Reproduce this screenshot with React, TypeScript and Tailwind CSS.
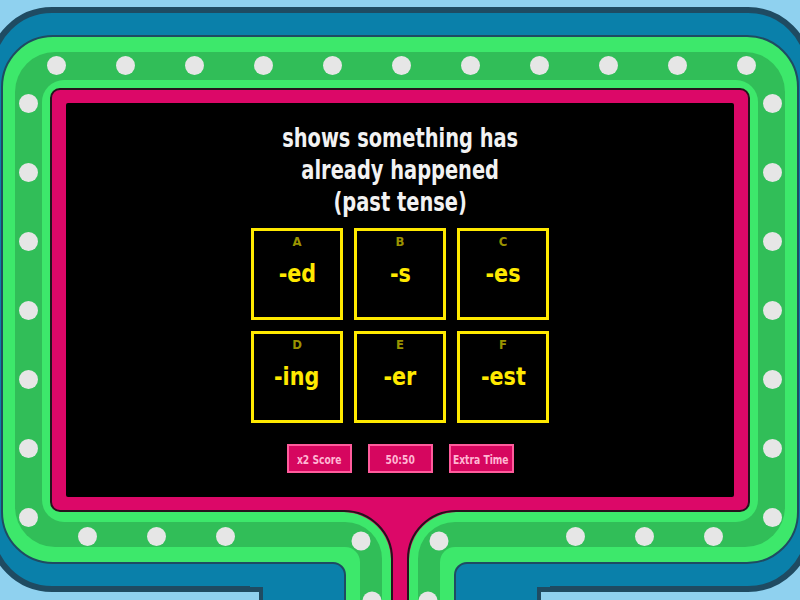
import React from "react";

const FONT = {
  fontFamily: '"DejaVu Sans Condensed", "DejaVu Sans", "Liberation Sans", sans-serif',
};

const Dot = () => <div className="w-[19px] h-[19px] rounded-full bg-[#e6e6e6] shrink-0" />;

function DotRow({ n, className }: { n: number; className: string }) {
  return (
    <div className={className}>
      {Array.from({ length: n }).map((_, i) => (
        <Dot key={i} />
      ))}
    </div>
  );
}

const answers = [
  { l: "A", t: "-ed" },
  { l: "B", t: "-s" },
  { l: "C", t: "-es" },
  { l: "D", t: "-ing" },
  { l: "E", t: "-er" },
  { l: "F", t: "-est" },
];

const LG = "#3de86b";
const MG = "#31be58";
const BLUE = "#0a80aa";
const DARK = "#1f4b62";
const PINK = "#dc0868";
const SKY = "#8fd1ef";

function Leg({ mirror }: { mirror?: boolean }) {
  return (
    <g transform={mirror ? "translate(800 0) scale(-1 1)" : undefined}>
      <path d="M250 512 H343 A48 48 0 0 1 391 560 V605 H250 Z" fill={LG} />
      <path d="M250 522 H345 A37 37 0 0 1 382 559 V605 H250 Z" fill={MG} />
      <path d="M250 547 H345 A15 15 0 0 1 360 562 V605 H250 Z" fill={LG} />
      <path d="M250 563 H333 A12 12 0 0 1 345 575 V605 H250 Z" fill={BLUE} />
      <path d="M250 563 H333 A12 12 0 0 1 345 575 V605" fill="none" stroke={DARK} strokeWidth="2" />
      <path d="M250 511 H343 A48 48 0 0 1 392 560 V605" fill="none" stroke="#26121c" strokeWidth="2" />
      <rect x="248" y="592" width="11" height="15" fill={SKY} />
      <rect x="248" y="587" width="15" height="5" fill={DARK} />
      <rect x="259" y="587" width="4" height="18" fill={DARK} />
      <circle cx="361" cy="541" r="9.5" fill="#e6e6e6" />
      <circle cx="372" cy="601" r="9.5" fill="#e6e6e6" />
    </g>
  );
}

export default function App() {
  return (
    <div className="relative w-[800px] h-[600px] overflow-hidden bg-[#8fd1ef] pt-[7px]" style={FONT}>
      {/* outer blue frame */}
      <div className="ml-[-12px] w-[824px] h-[585px] rounded-[64px] border-[6px] border-[#1f4b62] bg-[#0a80aa] pt-[22px] pl-[7px]">
        {/* green ring */}
        <div className="w-[798px] h-[529px] rounded-[52px] border-2 border-[#1f4b62] bg-[#3de86b] pt-[15px] pb-[15px] px-[12px]">
          <div className="h-full rounded-[40px] bg-[#31be58] pt-[28px] pb-[25px] px-[27px]">
            <div className="h-full rounded-[22px] bg-[#3de86b] pt-[8px] pb-[10px] px-[8px]">
              <div className="h-full rounded-[10px] border-2 border-[#26121c] bg-[#dc0868] py-[13px] px-[14px]">
                <div className="h-full bg-black rounded-[2px] flex flex-col items-center pt-[19px]">
                  <div className="text-[26px] leading-[32px] font-bold text-[#f2f2f2] text-center scale-x-[0.83] whitespace-nowrap">
                    <div>shows something has</div>
                    <div>already happened</div>
                    <div>(past tense)</div>
                  </div>
                  <div className="mt-[10px] grid grid-cols-3 gap-[11px]">
                    {answers.map((a) => (
                      <div
                        key={a.l}
                        className="relative w-[92px] h-[92px] border-[3px] border-[#ffe900] flex items-center justify-center"
                      >
                        <div className="absolute top-[3px] left-0 right-0 text-center text-[13px] leading-[15px] font-bold text-[#9a9300]">
                          {a.l}
                        </div>
                        <div className="text-[25px] leading-[30px] font-bold text-[#ffe900] scale-x-[0.92]">{a.t}</div>
                      </div>
                    ))}
                  </div>
                  <div className="mt-[21px] flex gap-[16px]">
                    {["x2 Score", "50:50", "Extra Time"].map((b) => (
                      <div
                        key={b}
                        className="w-[65px] h-[29px] border-2 border-[#ff5c9c] bg-[#d6065f] flex items-center justify-center pt-[2px] text-[12px] font-bold text-[#ffb6d3] whitespace-nowrap"
                      >
                        <span className="scale-x-[0.85]">{b}</span>
                      </div>
                    ))}
                  </div>
                </div>
              </div>
            </div>
          </div>
        </div>
      </div>

      {/* dots on the ring */}
      <DotRow n={11} className="absolute top-[56px] left-[47px] flex gap-[50px]" />
      <DotRow n={7} className="absolute top-[94px] left-[19px] flex flex-col gap-[50px]" />
      <DotRow n={7} className="absolute top-[94px] left-[763px] flex flex-col gap-[50px]" />
      <DotRow n={4} className="absolute top-[527px] left-[78px] flex gap-[50px]" />
      <DotRow n={4} className="absolute top-[527px] left-[497px] flex gap-[50px]" />

      {/* stand / stem below the screen */}
      <svg
        className="absolute left-[250px] top-[495px]"
        width="300"
        height="105"
        viewBox="250 495 300 105"
      >
        <rect x="330" y="509" width="140" height="100" fill={PINK} />
        <Leg />
        <Leg mirror />
      </svg>
    </div>
  );
}
